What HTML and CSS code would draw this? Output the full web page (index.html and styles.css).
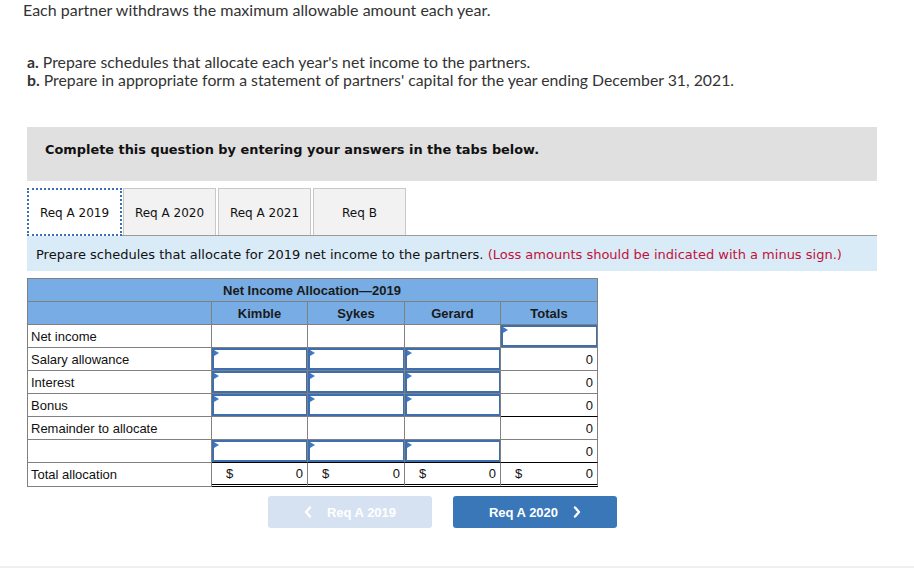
FILE: index.html
```html
<!DOCTYPE html>
<html>
<head>
<meta charset="utf-8">
<link rel="stylesheet" href="styles.css">
</head>
<body>
<div class="page">
  <p class="intro">Each partner withdraws the maximum allowable amount each year.</p>
  <div class="reqs">
    <p><b>a.</b> Prepare schedules that allocate each year's net income to the partners.</p>
    <p><b>b.</b> Prepare in appropriate form a statement of partners' capital for the year ending December 31, 2021.</p>
  </div>
  <div class="panel">
    <div class="banner">Complete this question by entering your answers in the tabs below.</div>
    <div class="tabs">
      <div class="tab active">Req A 2019</div>
      <div class="tab">Req A 2020</div>
      <div class="tab">Req A 2021</div>
      <div class="tab">Req B</div>
    </div>
    <div class="instr">Prepare schedules that allocate for 2019 net income to the partners. <span class="warn">(Loss amounts should be indicated with a minus sign.)</span></div>
    <table class="grid">
      <colgroup>
        <col class="c-label"><col class="c-num"><col class="c-num2"><col class="c-num"><col class="c-num2">
      </colgroup>
      <tr class="h1">
        <td></td><td colspan="2" class="title">Net Income Allocation—2019</td><td></td><td class="last"></td>
      </tr>
      <tr class="h2">
        <td></td><td>Kimble</td><td>Sykes</td><td>Gerard</td><td class="last">Totals</td>
      </tr>
      <tr>
        <td class="lbl">Net income</td><td></td><td></td><td></td><td class="inp"><div class="box"></div></td>
      </tr>
      <tr>
        <td class="lbl">Salary allowance</td><td class="inp"><div class="box"></div></td><td class="inp"><div class="box"></div></td><td class="inp"><div class="box"></div></td><td class="val">0</td>
      </tr>
      <tr>
        <td class="lbl">Interest</td><td class="inp"><div class="box"></div></td><td class="inp"><div class="box"></div></td><td class="inp"><div class="box"></div></td><td class="val">0</td>
      </tr>
      <tr>
        <td class="lbl">Bonus</td><td class="inp"><div class="box"></div></td><td class="inp"><div class="box"></div></td><td class="inp"><div class="box"></div></td><td class="val dark-bottom">0</td>
      </tr>
      <tr>
        <td class="lbl">Remainder to allocate</td><td></td><td></td><td></td><td class="val">0</td>
      </tr>
      <tr class="pre-total">
        <td class="lbl"></td><td class="inp"><div class="box"></div></td><td class="inp"><div class="box"></div></td><td class="inp"><div class="box"></div></td><td class="val">0</td>
      </tr>
      <tr class="total">
        <td class="lbl">Total allocation</td>
        <td class="money"><span>$</span><span>0</span></td>
        <td class="money"><span>$</span><span>0</span></td>
        <td class="money"><span>$</span><span>0</span></td>
        <td class="money"><span>$</span><span>0</span></td>
      </tr>
    </table>
    <div class="nav">
      <button class="btn prev"><svg class="chev" width="8" height="12" viewBox="0 0 8 12"><polyline points="6,1.5 2,6 6,10.5" fill="none" stroke="#fff" stroke-width="2.4" stroke-linecap="round" stroke-linejoin="round"/></svg>Req A 2019</button>
      <button class="btn next">Req A 2020<svg class="chev" width="8" height="12" viewBox="0 0 8 12"><polyline points="2,1.5 6,6 2,10.5" fill="none" stroke="#fff" stroke-width="2.4" stroke-linecap="round" stroke-linejoin="round"/></svg></button>
    </div>
  </div>
</div>
<div class="footer-line"></div>
</body>
</html>
```
FILE: styles.css
```css
* { box-sizing: border-box; }
html, body { margin: 0; padding: 0; background: #fff; }
body { width: 914px; height: 569px; overflow: hidden; position: relative; }

.page { padding-top: 1px; }

.intro {
  margin: 0 0 0 23px;
  font-family: "Lato", "Open Sans", sans-serif;
  font-size: 16px;
  line-height: 18px;
  color: #333;
}
.reqs {
  margin: 34px 0 0 27px;
  font-family: "Lato", "Open Sans", sans-serif;
  font-size: 15.8px;
  line-height: 18px;
  color: #333;
}
.reqs p { margin: 0; }
.reqs b { font-weight: 700; color: #333; }

.panel { margin: 38px 0 0 27px; width: 850px; }

.banner {
  height: 54px;
  background: #e0e0e0;
  padding: 15px 0 0 18px;
  font-family: "DejaVu Sans", Verdana, sans-serif;
  font-weight: bold;
  font-size: 12.9px;
  line-height: 16px;
  color: #111;
}

.tabs { display: flex; gap: 2px; margin-top: 7px; height: 47px; }
.tab {
  width: 93px;
  height: 47px;
  background: #f2f2f2;
  border: 1px solid #c8c8c8;
  border-bottom: none;
  display: flex;
  align-items: center;
  justify-content: center;
  padding-top: 1px;
  font-family: "DejaVu Sans", Verdana, sans-serif;
  font-size: 12px;
  color: #111;
}
.tab.active {
  width: 95px;
  margin-right: -1px;
  background: #fff;
  border: 2px dotted #3b6fb2;
  height: 48px;
  position: relative;
  z-index: 1;
}

.instr {
  height: 36px;
  background: #daebf8;
  border-top: 1px solid #9b9b9b;
  padding: 11px 0 0 9px;
  font-family: "DejaVu Sans", Verdana, sans-serif;
  font-size: 13px;
  line-height: 16px;
  color: #111;
}
.warn { color: #c0123a; }

.grid {
  margin-top: 7px;
  border-collapse: separate;
  border-spacing: 0;
  table-layout: fixed;
  width: 570px;
  border-top: 1px solid #808080;
  border-left: 1px solid #808080;
  font-family: "Liberation Sans", Arial, sans-serif;
  font-size: 13px;
  color: #111;
}
.c-label { width: 184px; }
.c-num { width: 96px; }
.c-num2 { width: 97px; }
.grid td {
  height: 23px;
  padding: 0;
  border-right: 1px solid #808080;
  border-bottom: 1px solid #808080;
  vertical-align: middle;
}
.grid tr.h1 td, .grid tr.h2 td {
  background: #77ade4;
  font-weight: bold;
  text-align: center;
  color: #1a1a1a;
}
.grid tr.h1 td { border-right: none; }
.grid tr.h1 td.last { border-right: 1px solid #808080; }
.grid tr.h1 td.title { text-align: center; padding-left: 7px; white-space: nowrap; }
.grid td.lbl { padding-left: 3px; }
.grid td.val { text-align: right; padding-right: 4px; }
.grid td.dark-bottom { border-bottom-color: #000; }
.grid tr.pre-total td:not(.lbl) { border-bottom-color: #000; }

.grid td.inp { position: relative; }
.box {
  height: 22px;
  border: 2px solid #3d6fb0;
  border-right-width: 1px;
  background: #fff;
  position: relative;
}
.box::before {
  content: "";
  position: absolute;
  left: 0;
  top: 0;
  border-top: 3px solid transparent;
  border-bottom: 3px solid transparent;
  border-left: 5px solid #3d79c4;
}

.grid tr.total td.money { border-bottom: 3px double #000; height: 24px; }
.money { padding: 0 4px 0 14px !important; }
.money span:first-child { float: left; }
.money span:last-child { float: right; }

.nav { display: flex; gap: 21px; margin: 9px 0 0 241px; }
.btn {
  width: 164px;
  height: 32px;
  border: none;
  border-radius: 3px;
  color: #fff;
  font-family: "Liberation Sans", Arial, sans-serif;
  font-weight: bold;
  font-size: 13px;
  display: flex;
  align-items: center;
  justify-content: center;
  padding: 0;
}
.btn.prev { background: #d6e2f1; }
.btn.next { background: #3a77b9; }
.chev { display: block; }
.prev .chev { margin-right: 15px; }
.next .chev { margin-left: 15px; }

.footer-line {
  position: absolute;
  left: 0;
  right: 0;
  top: 566px;
  height: 2px;
  background: #efefef;
}
```
